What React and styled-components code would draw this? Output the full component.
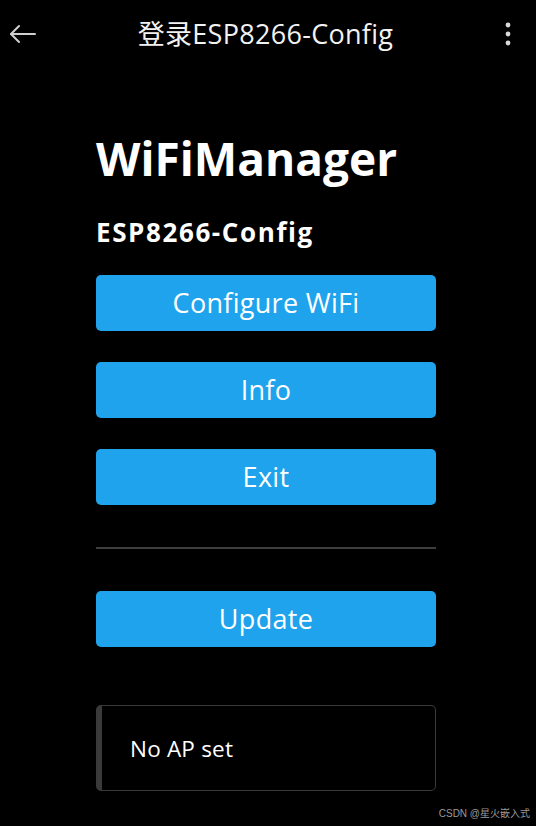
import React from 'react';
import styled, { createGlobalStyle } from 'styled-components';

const GlobalStyle = createGlobalStyle`
  html, body {
    margin: 0;
    padding: 0;
    background: #000;
  }
  body {
    font-family: "Open Sans", "Noto Sans", "Noto Sans CJK SC", sans-serif;
    color: #fff;
  }
`

const Page = styled.div`
  width: 536px;
  height: 826px;
  background: #000;
  display: flex;
  flex-direction: column;
  position: relative;
  overflow: hidden;
`

const TopBar = styled.div`
  height: 68px;
  display: flex;
  align-items: center;
  justify-content: space-between;
  padding: 0 14px 0 9px;
`

const BarTitle = styled.div`
  font-size: 27px;
  line-height: 30px;
  letter-spacing: 0.3px;
  color: #f2f2f2;
  font-family: "Open Sans", "Noto Sans CJK SC", sans-serif;
`

const IconBox = styled.div`
  width: 28px;
  height: 28px;
  display: flex;
  align-items: center;
  justify-content: center;
`

const Content = styled.div`
  width: 340px;
  margin-left: 96px;
  display: flex;
  flex-direction: column;
`

const Heading = styled.h1`
  margin: 62px 0 0;
  font-size: 46px;
  line-height: 56px;
  font-weight: 700;
`

const SubHeading = styled.h3`
  margin: 31px 0 0;
  font-size: 26px;
  line-height: 30px;
  letter-spacing: 1.6px;
  font-weight: 700;
`

const Menu = styled.div`
  display: flex;
  flex-direction: column;
  gap: 31px;
  margin-top: ${p => p.$top}px;
`

const Button = styled.button`
  height: 56px;
  width: 100%;
  border: 0;
  border-radius: 5px;
  background: #1fa3ec;
  color: #fff;
  font-family: "Open Sans", "Noto Sans", sans-serif;
  font-size: 27px;
  line-height: 30px;
  letter-spacing: 0.3px;
  font-weight: 400;
  padding: 0;
`

const Rule = styled.hr`
  margin: 42px 0 0;
  border: 0;
  height: 2px;
  background: #3e3e3e;
`

const Message = styled.div`
  margin-top: 58px;
  height: 86px;
  box-sizing: border-box;
  border: 1px solid #3a3a3a;
  border-left: 6px solid #3a3a3a;
  border-radius: 5px;
  display: flex;
  align-items: center;
  padding-left: 28px;
  font-size: 22.5px;
  letter-spacing: 0.2px;
`

const Watermark = styled.div`
  position: absolute;
  right: 6px;
  bottom: 6px;
  font-size: 10px;
  color: #9a9a9a;
  font-family: "Liberation Sans", "Noto Sans CJK SC", sans-serif;
`

const BackArrow = () => (
  <svg width="28" height="28" viewBox="0 0 28 28" fill="none" stroke="#cfcfcf" strokeWidth="2" strokeLinecap="round" strokeLinejoin="round">
    <path d="M26 14H2" />
    <path d="M10 6L2 14L10 22" />
  </svg>
)

const MoreDots = () => (
  <svg width="8" height="24" viewBox="0 0 8 24" fill="#d8d8d8">
    <circle cx="4" cy="3" r="2.4" />
    <circle cx="4" cy="12" r="2.4" />
    <circle cx="4" cy="21" r="2.4" />
  </svg>
)

const App = () => {
  return (<Page>
    <GlobalStyle />
    <TopBar>
      <IconBox><BackArrow /></IconBox>
      <BarTitle>登录ESP8266-Config</BarTitle>
      <IconBox><MoreDots /></IconBox>
    </TopBar>
    <Content>
      <Heading>WiFiManager</Heading>
      <SubHeading>ESP8266-Config</SubHeading>
      <Menu $top={28}>
        <Button>Configure WiFi</Button>
        <Button>Info</Button>
        <Button>Exit</Button>
      </Menu>
      <Rule />
      <Menu $top={42}>
        <Button>Update</Button>
      </Menu>
      <Message>No AP set</Message>
    </Content>
    <Watermark>CSDN @星火嵌入式</Watermark>
  </Page>
)}

export default App;
